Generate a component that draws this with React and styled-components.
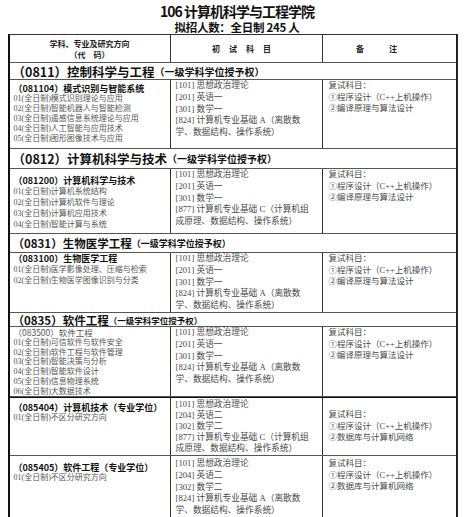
import React from "react";
import styled, { createGlobalStyle } from "styled-components";

const GlobalStyle = createGlobalStyle`
  html, body {
    margin: 0;
    padding: 0;
    background: #fff;
    overflow: hidden;
  }
  body {
    font-family: "Liberation Serif", "Noto Sans CJK SC", serif;
    color: #222;
  }
`;

const sections = [
  {
    code: "0811",
    name: "控制科学与工程",
    size: 12.5,
    small: 10,
    height: 17,
    entries: [
      {
        height: 69,
        leftPad: 3,
        heading: "（081104）模式识别与智能系统",
        items: [
          "01(全日制)模式识别理论与应用",
          "02(全日制)智能机器人与智能检测",
          "03(全日制)遥感信息系统理论与应用",
          "04(全日制)人工智能与应用技术",
          "05(全日制)图形图像技术与应用",
        ],
        exam: ["[101] 思想政治理论", "[201] 英语一", "[301] 数学一", "[824] 计算机专业基础 A（离散数", "学、数据结构、操作系统）"],
        note: ["复试科目：", "①程序设计（C++上机操作）", "②编译原理与算法设计"],
      },
    ],
  },
  {
    code: "0812",
    name: "计算机科学与技术",
    size: 12.5,
    small: 10,
    height: 20,
    entries: [
      {
        height: 65,
        leftPad: 6,
        itemLine: 11,
        heading: "（081200）计算机科学与技术",
        items: [
          "01(全日制)计算机系统结构",
          "02(全日制)计算机软件与理论",
          "03(全日制)计算机应用技术",
          "04(全日制)智能计算与系统",
        ],
        exam: ["[101] 思想政治理论", "[201] 英语一", "[301] 数学一", "[877] 计算机专业基础 C（计算机组", "成原理、数据结构、操作系统）"],
        note: ["复试科目：", "①程序设计（C++上机操作）", "②编译原理与算法设计"],
      },
    ],
  },
  {
    code: "0831",
    name: "生物医学工程",
    size: 11.5,
    small: 9,
    height: 19,
    entries: [
      {
        height: 60,
        leftPad: 0,
        itemLine: 11,
        heading: "（083100）生物医学工程",
        items: ["01(全日制)医学影像处理、压缩与检索", "02(全日制)生物医学图像识别与分类"],
        exam: ["[101] 思想政治理论", "[201] 英语一", "[301] 数学一", "[824] 计算机专业基础 A（离散数", "学、数据结构、操作系统）"],
        note: ["复试科目：", "①程序设计（C++上机操作）", "②编译原理与算法设计"],
      },
    ],
  },
  {
    code: "0835",
    name: "软件工程",
    size: 11.5,
    small: 8.5,
    height: 14,
    entries: [
      {
        height: 70,
        leftPad: 0,
        itemLine: 9.7,
        plainHeading: true,
        heading: "（083500）软件工程",
        items: [
          "01(全日制)可信软件与软件安全",
          "02(全日制)软件工程与软件管理",
          "03(全日制)智能决策与分析",
          "04(全日制)智能软件设计",
          "05(全日制)信息物理系统",
          "06(全日制)大数据技术",
        ],
        exam: ["[101] 思想政治理论", "[201] 英语一", "[301] 数学一", "[824] 计算机专业基础 A（离散数", "学、数据结构、操作系统）"],
        note: ["复试科目：", "①程序设计（C++上机操作）", "②编译原理与算法设计"],
      },
      {
        height: 59,
        leftPad: 4,
        thickTop: true,
        examPad: 1,
        examLine: 11.1,
        centerNote: true,
        heading: "（085404）计算机技术（专业学位）",
        items: ["01(全日制)不区分研究方向"],
        exam: ["[101] 思想政治理论", "[204] 英语二", "[302] 数学二", "[877] 计算机专业基础 C（计算机组", "成原理、数据结构、操作系统）"],
        note: ["复试科目：", "①程序设计（C++上机操作）", "②数据库与计算机网络"],
      },
      {
        height: 75,
        leftPad: 6,
        examPad: 2,
        notePad: 2,
        heading: "（085405）软件工程（专业学位）",
        items: ["01(全日制)不区分研究方向"],
        exam: ["[101] 思想政治理论", "[204] 英语二", "[302] 数学二", "[824] 计算机专业基础 A（离散数", "学、数据结构、操作系统）"],
        note: ["复试科目：", "①程序设计（C++上机操作）", "②数据库与计算机网络"],
      },
    ],
  },
];

const Page = styled.div`
  width: 474px;
  height: 517px;
  display: flex;
  flex-direction: column;
  align-items: center;
`;

const Title = styled.h1`
  margin: 3px 0 0;
  font-family: "Noto Sans CJK SC", sans-serif;
  font-size: 14px;
  line-height: 17px;
  font-weight: 700;
  letter-spacing: -1px;
  color: #111;
`;

const Subtitle = styled.h2`
  margin: 0;
  font-family: "Noto Sans CJK SC", sans-serif;
  font-size: 11.5px;
  line-height: 14px;
  font-weight: 700;
  letter-spacing: -0.3px;
  color: #111;
`;

const Table = styled.div`
  box-sizing: border-box;
  width: 450px;
  margin-left: -9px;
  border-left: 2px solid #111;
  border-right: 2px solid #222;
  border-top: 1px solid #333;
`;

const Row = styled.div`
  display: grid;
  grid-template-columns: 161px 152px 1fr;
  height: ${(p) => p.$height}px;
  box-sizing: border-box;
  border-bottom: 1px solid #555;
  border-top: ${(p) => (p.$thickTop ? "1px solid #111" : "none")};
`;

const HeadCell = styled.div`
  display: flex;
  flex-direction: column;
  align-items: center;
  justify-content: center;
  border-right: 1px solid #333;
  font-family: "Noto Sans CJK SC", sans-serif;
  font-weight: 700;
  font-size: 8px;
  line-height: 11px;
  letter-spacing: ${(p) => p.$spacing || 0}px;
  color: #222;
  &:last-child {
    border-right: none;
  }
`;

const SectionRow = styled.div`
  height: ${(p) => p.$height}px;
  box-sizing: border-box;
  display: flex;
  align-items: center;
  padding-left: 3px;
  border-bottom: 1px solid #555;
  font-family: "Noto Sans CJK SC", sans-serif;
  font-weight: 700;
  color: #111;
  white-space: nowrap;
  overflow: hidden;
`;

const SectionName = styled.span`
  font-size: ${(p) => p.$size}px;
`;

const SectionNote = styled.span`
  font-size: ${(p) => p.$size}px;
`;

const Cell = styled.div`
  box-sizing: border-box;
  padding: ${(p) => p.$pad || 0}px 0 0 ${(p) => p.$left}px;
  border-right: 1px solid #333;
  display: flex;
  flex-direction: column;
  justify-content: ${(p) => (p.$center ? "center" : "flex-start")};
  white-space: nowrap;
  overflow: hidden;
  &:last-child {
    border-right: none;
  }
`;

const Heading = styled.div`
  font-family: "Noto Sans CJK SC", sans-serif;
  font-weight: ${(p) => (p.$plain ? 400 : 700)};
  font-size: ${(p) => (p.$plain ? 8.5 : 9)}px;
  line-height: 11px;
  color: ${(p) => (p.$plain ? "#555" : "#111")};
`;

const Item = styled.div`
  font-size: 8px;
  line-height: ${(p) => p.$line || 10}px;
  color: #555;
`;

const ExamLine = styled.div`
  font-size: 8.7px;
  line-height: ${(p) => p.$line || 11.75}px;
  color: #4a4a4a;
`;

const NoteLine = styled.div`
  font-size: 8.5px;
  line-height: 11.5px;
  color: #4a4a4a;
`;

const Entry = ({ e }) => (
  <Row $height={e.height} $thickTop={e.thickTop}>
    <Cell $left={4} $pad={e.leftPad}>
      <Heading $plain={e.plainHeading}>{e.heading}</Heading>
      {e.items.map((t) => (
        <Item key={t} $line={e.itemLine}>
          {t}
        </Item>
      ))}
    </Cell>
    <Cell $left={5} $pad={e.examPad}>
      {e.exam.map((t) => (
        <ExamLine key={t} $line={e.examLine}>
          {t}
        </ExamLine>
      ))}
    </Cell>
    <Cell $left={6} $pad={e.notePad} $center={e.centerNote}>
      {e.note.map((t) => (
        <NoteLine key={t}>{t}</NoteLine>
      ))}
    </Cell>
  </Row>
);

export default function App() {
  return (
    <>
      <GlobalStyle />
      <Page>
        <Title>106 计算机科学与工程学院</Title>
        <Subtitle>拟招人数：全日制 245 人</Subtitle>
        <Table>
          <Row $height={28}>
            <HeadCell>
              <span>学科、专业及研究方向</span>
              <span>（代　码）</span>
            </HeadCell>
            <HeadCell $spacing={9}>初试科目</HeadCell>
            <HeadCell $spacing={25}>备注</HeadCell>
          </Row>
          {sections.map((s) => (
            <React.Fragment key={s.code}>
              <SectionRow $height={s.height}>
                <SectionName $size={s.size}>
                  （{s.code}）{s.name}
                </SectionName>
                <SectionNote $size={s.small}>（一级学科学位授予权）</SectionNote>
              </SectionRow>
              {s.entries.map((e) => (
                <Entry key={e.heading} e={e} />
              ))}
            </React.Fragment>
          ))}
        </Table>
      </Page>
    </>
  );
}
